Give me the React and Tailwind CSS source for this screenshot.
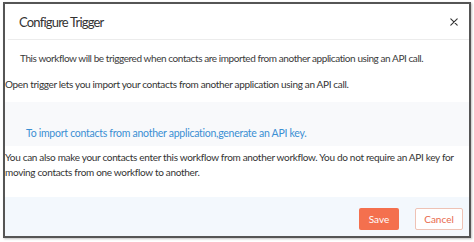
import React from 'react'

export default function App() {
  return (
    <div className="w-[474px] h-[242px] bg-white pt-[2px] pl-[3px] font-['Lato','Liberation_Sans',sans-serif]">
      <div className="w-[468px] h-[236px] border-2 border-[#555] bg-white flex flex-col shadow-[1px_1px_2px_rgba(0,0,0,0.25)]">
        {/* Header */}
        <div className="h-[36px] ml-[3px] flex items-center justify-between border-b border-[#ececec] pl-[11px] pr-[11px]">
          <span className="text-[13px] tracking-[-0.8px] text-[#333] leading-none pt-[1px]">Configure Trigger</span>
          <svg width="8" height="8" viewBox="0 0 10 10" className="text-[#333]">
            <path d="M1 1 L9 9 M9 1 L1 9" stroke="currentColor" strokeWidth="1.4" strokeLinecap="round" />
          </svg>
        </div>

        {/* Body */}
        <div className="flex-1 flex flex-col text-[#333]">
          <p className="mt-[10px] pl-[15px] text-[10px] tracking-[-0.42px] leading-[16px] text-[#3a3a3a] whitespace-nowrap">
            This workflow will be triggered when contacts are imported from another application using an API call.
          </p>
          <p className="mt-[10px] text-[10px] tracking-[-0.33px] leading-[16px]">
            Open trigger lets you import your contacts from another application using an API call.
          </p>
          <div className="mt-[10px] h-[44px] bg-[#f8f9fb] pl-[21px] pt-[17px]">
            <span className="text-[10.5px] tracking-[-0.27px] leading-[16px] text-[#3b8fd3]">
              To import contacts from another application,generate an API key.
            </span>
          </div>
          <p className="mt-[4px] text-[10px] tracking-[-0.31px] leading-[15px]">
            You can also make your contacts enter this workflow from another workflow. You do not require an API key for moving contacts from one workflow to another.
          </p>
        </div>

        {/* Footer */}
        <div className="h-[39px] bg-[#f3f8fd] flex items-start justify-end gap-[16px] pt-[11px] pr-[6px]">
          <button className="w-[40px] h-[22px] rounded-[2px] bg-[#f4704e] text-white text-[10px]">Save</button>
          <button className="w-[48px] h-[22px] rounded-[2px] bg-white border border-[#eec2b5] text-[#e8694b] text-[10px]">Cancel</button>
        </div>
      </div>
    </div>
  )
}
